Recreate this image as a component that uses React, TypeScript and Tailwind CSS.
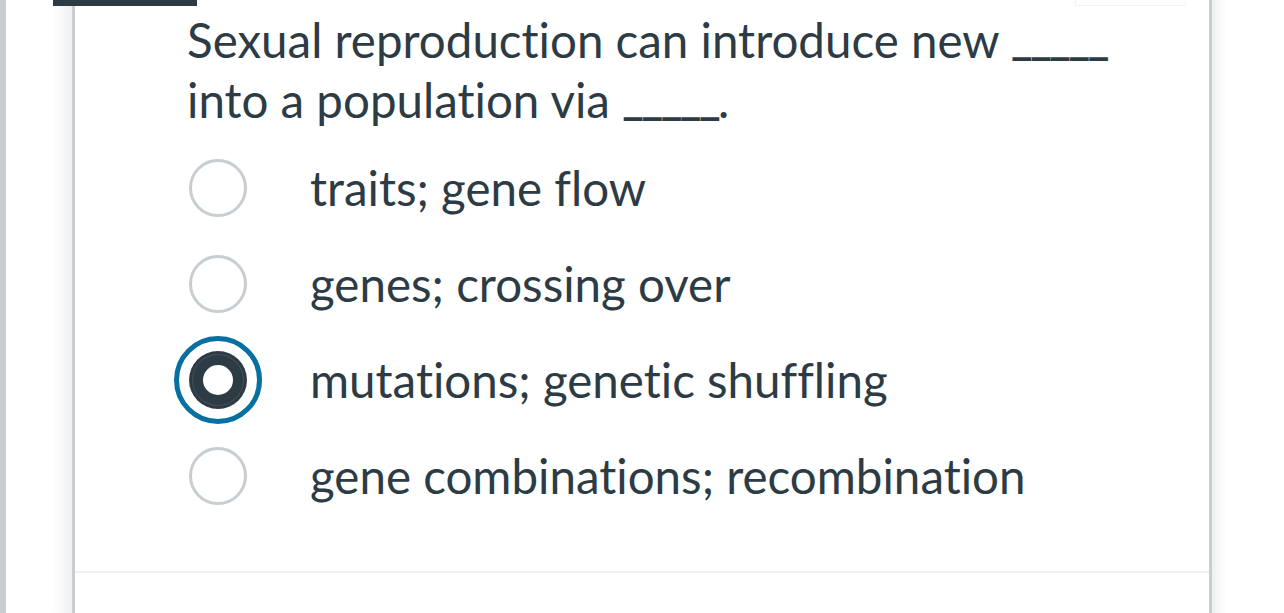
import { useState } from 'react';

const options = [
  'traits; gene flow',
  'genes; crossing over',
  'mutations; genetic shuffling',
  'gene combinations; recombination',
];

function Radio({ checked }: { checked: boolean }) {
  if (checked) {
    return (
      <span className="relative flex h-[58px] w-[58px] shrink-0 items-center justify-center rounded-full bg-[#2d3b45] outline-[5px] outline-offset-[10px] outline-[#0770a3] outline-solid">
        <span className="absolute inset-[3px] rounded-full border border-[#44515a]" />
        <span className="relative h-[30px] w-[30px] rounded-full bg-white" />
      </span>
    );
  }
  return <span className="h-[58px] w-[58px] shrink-0 rounded-full border-[3px] border-[#c7cdd1] bg-white" />;
}

// fill-in-the-blank marker, nudged up to sit on the baseline
function Blank() {
  return <span className="relative -top-[4px] font-bold tracking-[-3px]">_____</span>;
}

export default function App() {
  const [selected, setSelected] = useState(2);

  return (
    <div className="relative flex h-[613px] w-[1284px] overflow-hidden bg-white font-['Lato',sans-serif] text-[#2d3b45] [font-variant-ligatures:no-common-ligatures]">
      {/* page gutter */}
      <div className="w-[6px] shrink-0 bg-[#c7cdd1]" />
      <div className="w-[66px] shrink-0 bg-gradient-to-r from-white from-70% to-[#eef0f1]" />

      {/* question card */}
      <div className="flex w-[1140px] shrink-0 flex-col border-x-[3px] border-[#c7cdd1] bg-white">
        <div className="pl-[112px] pr-[60px] pt-[10px]">
          <p className="text-[47.5px] leading-[60px]">
            Sexual reproduction can introduce new <Blank /> into a population via <Blank />.
          </p>
        </div>

        <div className="mt-[10px] flex flex-col pl-[114px]">
          {options.map((label, i) => (
            <button
              key={label}
              onClick={() => setSelected(i)}
              className="flex h-[96px] items-center gap-[63px] text-left"
            >
              <Radio checked={selected === i} />
              <span className="text-[47.5px] leading-[60px]">{label}</span>
            </button>
          ))}
        </div>

        <div className="mt-[47px] border-t-2 border-[#f2f2f2]" />
      </div>

      <div className="flex-1 bg-gradient-to-r from-[#eef0f1] via-white via-20% to-white" />

      {/* header tab strip */}
      <div className="absolute left-[53px] top-0 h-[6px] w-[144px] bg-[#2d3b45]" />
      <div className="absolute left-[1075px] top-0 h-[6px] w-[111px] border-x border-b border-[#f4f4f4]" />
    </div>
  );
}
